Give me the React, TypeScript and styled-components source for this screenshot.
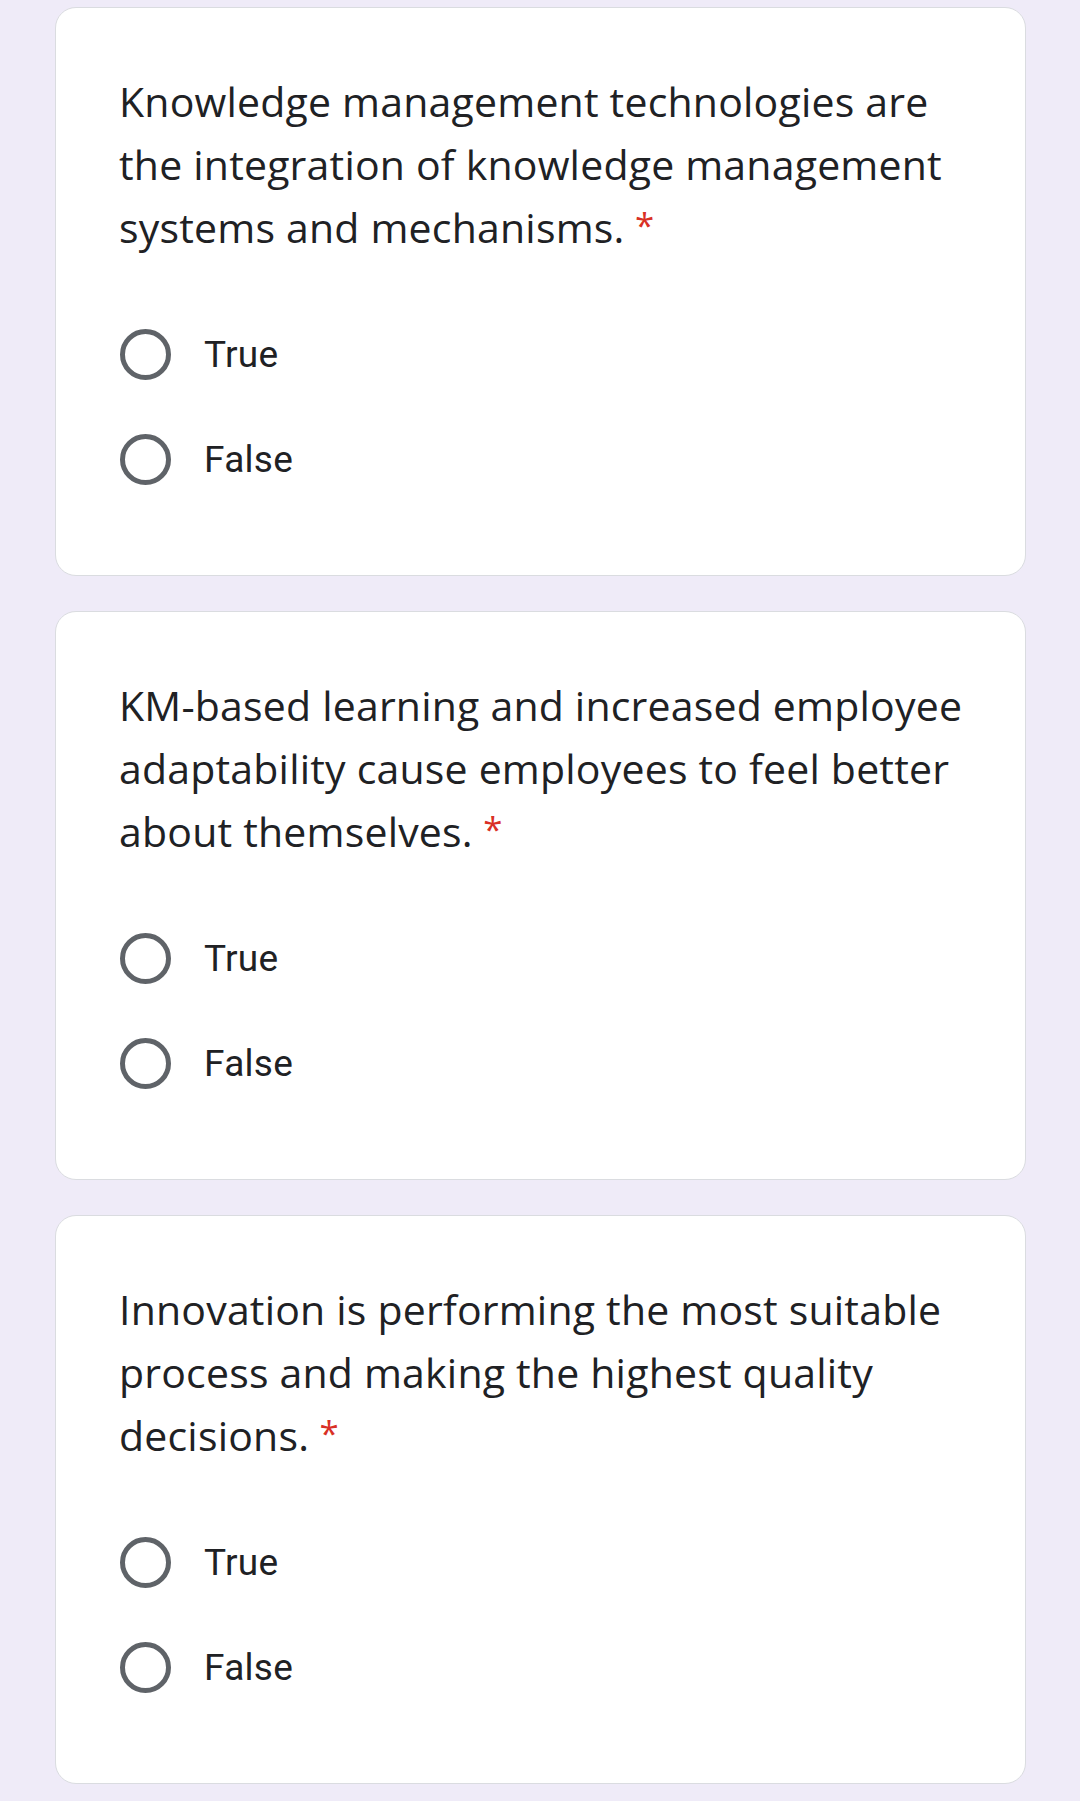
import React from "react";
import styled, { createGlobalStyle } from "styled-components";

const Global = createGlobalStyle`
  html, body { margin: 0; padding: 0; background: #efebf8; }
  body { font-family: "Open Sans", "Noto Sans", sans-serif; }
`;

const Page = styled.div`
  display: flex;
  flex-direction: column;
  gap: 35px;
  padding: 7px 54px 17px 55px;
  background: #efebf8;
  min-height: 1801px;
  box-sizing: border-box;
`;

const Card = styled.section`
  background: #ffffff;
  border: 1.5px solid #dadce0;
  border-radius: 21px;
  padding: 62px 63px 63px 63px;
  height: 569px;
  box-sizing: border-box;
  display: flex;
  flex-direction: column;
`;

const Title = styled.div`
  font-family: "Open Sans", "Noto Sans", sans-serif;
  font-size: 41px;
  line-height: 63px;
  color: #202124;
  letter-spacing: 0.2px;
  white-space: nowrap;
`;

const Required = styled.span`
  color: #d93025;
  padding-left: 0.3em;
  font-size: 0.85em;
  line-height: 1;
  position: relative;
  top: -5px;
`;

const Options = styled.div`
  display: flex;
  flex-direction: column;
  margin-top: 43px;
`;

const Option = styled.label`
  display: flex;
  align-items: center;
  height: 105px;
  cursor: pointer;
`;

const Radio = styled.span`
  width: 51px;
  height: 51px;
  border: 5px solid #5f6368;
  border-radius: 50%;
  box-sizing: border-box;
  flex: none;
  margin-left: 1px;
`;

const Label = styled.span`
  font-family: Roboto, "Noto Sans", sans-serif;
  font-size: 37px;
  color: #202124;
  margin-left: 33px;
  letter-spacing: 0.3px;
`;

const questions: string[][] = [
  [
    "Knowledge management technologies are",
    "the integration of knowledge management",
    "systems and mechanisms.",
  ],
  [
    "KM-based learning and increased employee",
    "adaptability cause employees to feel better",
    "about themselves.",
  ],
  [
    "Innovation is performing the most suitable",
    "process and making the highest quality",
    "decisions.",
  ],
];

export default function App() {
  return (
    <>
      <Global />
      <Page>
        {questions.map((lines, qi) => (
          <Card key={qi}>
            <Title>
              {lines.map((l, i) => (
                <React.Fragment key={i}>
                  {l}
                  {i < lines.length - 1 ? <br /> : <Required>*</Required>}
                </React.Fragment>
              ))}
            </Title>
            <Options>
              {["True", "False"].map((o) => (
                <Option key={o}>
                  <Radio />
                  <Label>{o}</Label>
                </Option>
              ))}
            </Options>
          </Card>
        ))}
      </Page>
    </>
  );
}
